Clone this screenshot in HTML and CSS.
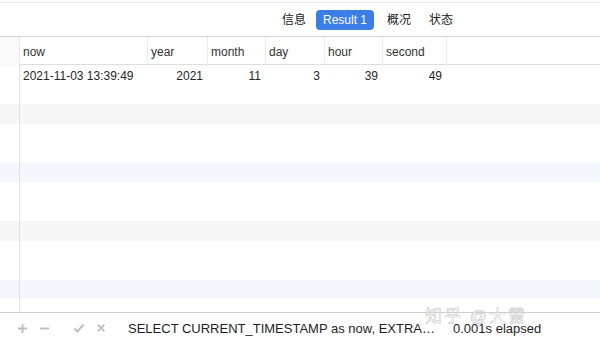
FILE: index.html
```html
<!DOCTYPE html>
<html lang="zh">
<head>
  <meta charset="UTF-8">
  <title>Result 1</title>
  <link rel="stylesheet" href="styles.css">
</head>
<body>
  <div class="window">
    <div class="toolbar">
      <div class="tabs">
        <span class="tab">信息</span>
        <span class="tab active">Result 1</span>
        <span class="tab">概况</span>
        <span class="tab">状态</span>
      </div>
    </div>

    <div class="grid">
      <div class="row head">
        <div class="cell idx"></div>
        <div class="cell">now</div>
        <div class="cell">year</div>
        <div class="cell">month</div>
        <div class="cell">day</div>
        <div class="cell">hour</div>
        <div class="cell">second</div>
        <div class="cell rest"></div>
      </div>
      <div class="row first">
        <div class="cell idx"></div>
        <div class="cell">2021-11-03 13:39:49</div>
        <div class="cell num">2021</div>
        <div class="cell num">11</div>
        <div class="cell num">3</div>
        <div class="cell num">39</div>
        <div class="cell num">49</div>
        <div class="cell rest"></div>
      </div>
      <div class="row empty"><div class="cell idx"></div></div>
      <div class="row empty gray"><div class="cell idx"></div></div>
      <div class="row empty"><div class="cell idx"></div></div>
      <div class="row empty"><div class="cell idx"></div></div>
      <div class="row empty blue"><div class="cell idx"></div></div>
      <div class="row empty"><div class="cell idx"></div></div>
      <div class="row empty"><div class="cell idx"></div></div>
      <div class="row empty gray"><div class="cell idx"></div></div>
      <div class="row empty"><div class="cell idx"></div></div>
      <div class="row empty"><div class="cell idx"></div></div>
      <div class="row empty blue"><div class="cell idx"></div></div>
      <div class="row empty short"><div class="cell idx"></div></div>
    </div>

    <div class="statusbar">
      <div class="actions">
        <svg class="icon" viewBox="0 0 12 12" width="11" height="11"><path d="M6 1v10M1 6h10" /></svg>
        <svg class="icon" viewBox="0 0 12 12" width="11" height="11"><path d="M1 6h10" /></svg>
        <svg class="icon check" viewBox="0 0 12 12" width="12" height="12"><path d="M1.5 6.5l3 3 6-7" /></svg>
        <svg class="icon" viewBox="0 0 12 12" width="10" height="10"><path d="M2 2l8 8M10 2l-8 8" /></svg>
      </div>
      <span class="sql">SELECT CURRENT_TIMESTAMP as now, EXTRA…</span>
      <span class="elapsed">0.001s elapsed</span>
      <span class="watermark">知乎 @大雷</span>
    </div>
  </div>
</body>
</html>
```

FILE: styles.css
```css
:root {
  --line: #e2e2e2;
  --text: #262626;
  --accent: #3a7ee6;
  --stripe-gray: #f6f6f6;
  --stripe-blue: #f4f7fc;
}

* {
  box-sizing: border-box;
  margin: 0;
  padding: 0;
}

body {
  font-family: 'Liberation Sans', Arial, 'Noto Sans CJK SC', sans-serif;
  background: #fff;
  color: var(--text);
}

.window {
  width: 600px;
  height: 341px;
  overflow: hidden;
  display: flex;
  flex-direction: column;
  padding-top: 2px;
}

.toolbar {
  height: 36px;
  border-top: 1px solid #ececec;
  border-bottom: 1px solid #d6d6d6;
  display: flex;
  align-items: center;
  padding-left: 273px;
  padding-top: 1px;
}

.tabs {
  display: flex;
  align-items: center;
}

.tab {
  font-size: 12px;
  line-height: 20px;
  padding: 0 9px;
  border-radius: 4px;
  color: #222;
}

.tab.active {
  background: var(--accent);
  color: #fff;
  width: 58px;
  text-align: center;
  padding: 0;
  margin: 0 4px 0 1px;
}

.grid {
  flex: 1;
  font-size: 12px;
}

.row {
  display: grid;
  grid-template-columns: 20px 128px 60px 58px 59px 58px 64px 1fr;
  height: 19.5px;
}

.row .cell {
  line-height: 19.5px;
  padding: 0 3px;
  white-space: nowrap;
}

.row .idx {
  border-right: 1px solid var(--line);
  padding: 0;
}

.row.head {
  height: 28px;
  border-bottom: 1px solid #dedede;
}

.row.head .cell {
  line-height: 27px;
  padding-top: 2px;
  border-right: 1px solid #ececec;
  color: #333;
}

.row.head .idx {
  background: #f9f9f9;
  border-right-color: #e6e6e6;
  padding: 0;
}

.row.head .rest {
  border-right: none;
}

.row.first .cell {
  padding-top: 2px;
}

.row.first .idx {
  padding: 0;
}

.row .num {
  text-align: right;
  padding-right: 5px;
}

.row.empty {
  display: block;
}

.row.empty .idx {
  width: 20px;
  height: 100%;
}

.row.gray {
  background: var(--stripe-gray);
}

.row.blue {
  background: var(--stripe-blue);
}

.row.short {
  height: 13px;
}

.statusbar {
  position: relative;
  height: 29px;
  border-top: 1px solid #cfcfcf;
  display: flex;
  align-items: center;
  padding-left: 17px;
  padding-top: 2px;
  font-size: 13px;
  color: #1e1e1e;
}

.actions {
  display: flex;
  align-items: center;
  gap: 11px;
  width: 111px;
}

.icon {
  fill: none;
  stroke: #bdbdbd;
  stroke-width: 2;
}

.icon.check {
  margin-left: 12px;
}

.sql {
  margin-right: 18px;
}

.watermark {
  position: absolute;
  left: 425px;
  top: -2px;
  font-size: 17px;
  line-height: 12px;
  color: rgba(255, 255, 255, 0.6);
  -webkit-text-stroke: 0.5px #c4c4c4;
  letter-spacing: 2px;
}
```
